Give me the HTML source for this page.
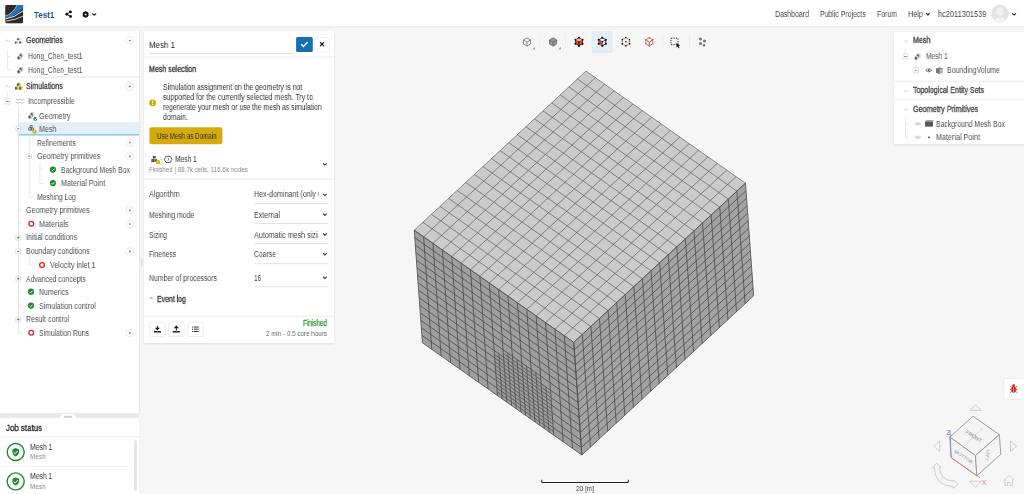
<!DOCTYPE html>
<html><head><meta charset="utf-8">
<style>
html,body{margin:0;padding:0;}
body{width:1024px;height:494px;overflow:hidden;position:relative;background:#f6f6f6;font-family:"Liberation Sans",sans-serif;}
.abs{position:absolute;}
.t{position:absolute;white-space:nowrap;transform-origin:0 0;will-change:transform;}
.clip{position:absolute;overflow:hidden;}
.panel{position:absolute;background:#fff;}
.hl{position:absolute;background:#e6e6e6;height:1px;}
</style></head><body>
<!-- top bar -->
<div class="abs" style="left:0;top:25px;width:1024px;height:4px;background:linear-gradient(#ebebeb,#f0f0f0 50%,#f6f6f6);"></div><div class="abs" style="left:0;top:0;width:1024px;height:25.5px;background:#fff;"></div>
<!-- left panel -->
<div class="panel" style="left:0;top:31px;width:139px;height:382px;box-shadow:1px 0 1px rgba(0,0,0,0.06);"></div>
<!-- job status -->
<div class="panel" style="left:0;top:418px;width:139px;height:76px;"></div>
<!-- mesh panel -->
<div class="panel" style="left:144px;top:31px;width:190px;height:312px;box-shadow:0 1px 2px rgba(0,0,0,0.1);"></div>
<!-- right panel -->
<div class="panel" style="left:894px;top:32px;width:130px;height:112px;box-shadow:0 1px 3px rgba(0,0,0,0.1);"></div>
<!-- logo -->
<svg class="abs" style="left:2px;top:2px" width="24" height="24" viewBox="0 0 24 24">
<defs><clipPath id="lc"><path d="M4.7,2.9 H21.1 V19.4 Q21.1,21.4 19.1,21.4 H5.2 Q3.2,21.4 3.2,19.4 V4.4 Q3.2,2.9 4.7,2.9Z"/></clipPath></defs>
<g clip-path="url(#lc)">
<rect x="3" y="2.7" width="18.3" height="18.9" fill="#2e2a28"/>
<path d="M2,14.6 Q11,12.6 15.8,2" stroke="#fff" stroke-width="0.8" fill="none"/>
<path d="M2,14.9 Q11,12.8 16.2,2 L22,2 L22,5.6 Q13,15 2,16.8 Z" fill="#1f78bd"/>
<path d="M2,17.4 Q13,15.6 22,8.2" stroke="#fff" stroke-width="0.9" fill="none"/>
<path d="M3.5,19.2 Q14,17.8 22,13.8" stroke="#fff" stroke-width="0.8" fill="none"/>
</g></svg>
<!-- share -->
<svg class="abs" style="left:64px;top:10px" width="9" height="9" viewBox="64 10 9 9">
<path d="M70.4,11.9 L66.8,14.2 L70.5,16.5" stroke="#111" stroke-width="0.9" fill="none"/>
<circle cx="70.4" cy="11.9" r="1.45" fill="#111"/><circle cx="66.8" cy="14.2" r="1.45" fill="#111"/><circle cx="70.5" cy="16.5" r="1.45" fill="#111"/>
</svg>
<!-- gear -->
<svg class="abs" style="left:81px;top:10px" width="18" height="9" viewBox="81 10 18 9">
<g transform="translate(85.6,14.4)">
<circle r="2.1" fill="none" stroke="#111" stroke-width="1.5"/>
<g fill="#111"><rect x="-0.7" y="-3.1" width="1.4" height="6.2"/><rect x="-0.7" y="-3.1" width="1.4" height="6.2" transform="rotate(60)"/><rect x="-0.7" y="-3.1" width="1.4" height="6.2" transform="rotate(120)"/></g>
<circle r="0.9" fill="#fff"/>
</g>
<path d="M92.3,13.3 L94.2,15.2 L96.1,13.3" stroke="#222" stroke-width="1.1" fill="none"/>
</svg>
<!-- help caret -->
<svg class="abs" style="left:924px;top:11px" width="8" height="6" viewBox="924 11 8 6">
<path d="M926.2,13.2 L927.9,14.9 L929.6,13.2" stroke="#222" stroke-width="1.2" fill="none"/></svg>
<!-- avatar -->
<svg class="abs" style="left:990px;top:3px" width="30" height="21" viewBox="990 3 30 21">
<defs><clipPath id="av"><circle cx="999.9" cy="13.6" r="8.6"/></clipPath></defs>
<circle cx="999.9" cy="13.6" r="8.8" fill="#e3e3e3" stroke="#e9e9e9" stroke-width="0.6"/>
<g clip-path="url(#av)"><ellipse cx="1000" cy="11.6" rx="3.4" ry="4.2" fill="#f1f1f1"/><ellipse cx="1000" cy="22.5" rx="7" ry="5" fill="#f1f1f1"/></g>
<path d="M1012.2,13.3 L1014.1,15.1 L1016,13.3" stroke="#222" stroke-width="1.1" fill="none"/>
</svg>
<svg class="abs" style="left:0;top:31px" width="139" height="382" viewBox="0 31 139 382"><rect x="0" y="76.2" width="139" height="1.5" fill="#efefef"/><rect x="17.8" y="122.2" width="121.2" height="13" fill="#e3eff8"/><rect x="17.8" y="134.4" width="121.2" height="1" fill="#5ab8ea"/><path d="M5.1,41.8 L7.1,39.8 L9.1,41.8" stroke="#b6c0cc" stroke-width="0.8" fill="none"/><rect x="16.900000000000002" y="37.699999999999996" width="3.9" height="2.7" rx="1.56" fill="#cfcfcf"/><rect x="16.900000000000002" y="38.24" width="2.15" height="2.03" rx="1.17" fill="#555"/><rect x="14.9" y="40.9" width="3.0" height="2.9" rx="1.20" fill="#cfcfcf"/><rect x="14.9" y="41.48" width="1.65" height="2.17" rx="0.90" fill="#555"/><rect x="18.8" y="40.9" width="3.9" height="2.9" rx="1.56" fill="#cfcfcf"/><rect x="18.8" y="41.48" width="2.15" height="2.17" rx="1.17" fill="#555"/><circle cx="129.8" cy="40.5" r="3.8" fill="#fff" stroke="#dfe5ec" stroke-width="0.8"/><circle cx="129.8" cy="40.5" r="0.85" fill="#666"/><line x1="7.5" y1="49.5" x2="7.5" y2="69.9" stroke="#e4e9ee" stroke-width="1"/><line x1="7.5" y1="56.4" x2="11" y2="56.4" stroke="#e4e9ee" stroke-width="1"/><line x1="7.5" y1="69.9" x2="11" y2="69.9" stroke="#e4e9ee" stroke-width="1"/><rect x="19.400000000000002" y="53.0" width="3.9" height="4.9" rx="1.56" fill="#cfcfcf"/><rect x="19.400000000000002" y="53.98" width="2.15" height="3.68" rx="1.17" fill="#555"/><rect x="17.5" y="55.6" width="3.8" height="4.2" rx="1.52" fill="#cfcfcf"/><rect x="17.5" y="56.44" width="2.09" height="3.15" rx="1.14" fill="#555"/><rect x="19.400000000000002" y="66.7" width="3.9" height="4.9" rx="1.56" fill="#cfcfcf"/><rect x="19.400000000000002" y="67.68" width="2.15" height="3.68" rx="1.17" fill="#555"/><rect x="17.5" y="69.3" width="3.8" height="4.2" rx="1.52" fill="#cfcfcf"/><rect x="17.5" y="70.14" width="2.09" height="3.15" rx="1.14" fill="#555"/><path d="M4.9,87.6 L6.9,85.6 L8.9,87.6" stroke="#b6c0cc" stroke-width="0.8" fill="none"/><rect x="16.9" y="82.4" width="3.9" height="3.9" rx="1.75" fill="#f2c200"/><rect x="16.9" y="83.18" width="2.15" height="2.92" rx="1.17" fill="#1a6fc0"/><rect x="14.9" y="85.9" width="3.6" height="4.1" rx="1.62" fill="#f2c200"/><rect x="14.9" y="86.72" width="1.98" height="3.07" rx="1.08" fill="#1a6fc0"/><rect x="18.9" y="85.9" width="3.8" height="4.1" rx="1.71" fill="#f2c200"/><rect x="18.9" y="86.72" width="2.09" height="3.07" rx="1.14" fill="#1a6fc0"/><circle cx="129.8" cy="86.4" r="3.8" fill="#fff" stroke="#dfe5ec" stroke-width="0.8"/><circle cx="129.8" cy="86.4" r="0.85" fill="#666"/><line x1="7.3" y1="92" x2="7.3" y2="98.3" stroke="#e4e9ee" stroke-width="1"/><rect x="4.9" y="98.80000000000001" width="5.2" height="5.2" fill="#fff" stroke="#d5dce4" stroke-width="0.9" rx="0.5"/><line x1="6.1000000000000005" y1="101.4" x2="8.900000000000002" y2="101.4" stroke="#555" stroke-width="0.7"/><path d="M16,99.3 Q18,101 20.2,99.3 Q22.3,101 24.4,99.3" stroke="#aaa" stroke-width="0.7" fill="none"/><path d="M16,102.3 Q18,104 20.2,102.3 Q22.3,104 24.4,102.3" stroke="#aaa" stroke-width="0.7" fill="none"/><line x1="18.5" y1="106.3" x2="18.5" y2="332.8" stroke="#e4e9ee" stroke-width="1"/><line x1="18.5" y1="115.5" x2="22" y2="115.5" stroke="#e4e9ee" stroke-width="1"/><line x1="18.5" y1="210.2" x2="22" y2="210.2" stroke="#e4e9ee" stroke-width="1"/><line x1="18.5" y1="223.8" x2="22" y2="223.8" stroke="#e4e9ee" stroke-width="1"/><line x1="18.5" y1="291.7" x2="22" y2="291.7" stroke="#e4e9ee" stroke-width="1"/><line x1="18.5" y1="305.6" x2="22" y2="305.6" stroke="#e4e9ee" stroke-width="1"/><line x1="18.5" y1="332.8" x2="22" y2="332.8" stroke="#e4e9ee" stroke-width="1"/><rect x="30.400000000000002" y="112.0" width="3.9" height="4.9" rx="1.56" fill="#cfcfcf"/><rect x="30.400000000000002" y="112.98" width="2.15" height="3.68" rx="1.17" fill="#555"/><rect x="28.5" y="114.6" width="3.8" height="4.2" rx="1.52" fill="#cfcfcf"/><rect x="28.5" y="115.44" width="2.09" height="3.15" rx="1.14" fill="#555"/><circle cx="35.2" cy="119.1" r="2.0" fill="#1d8a2c"/><path d="M33.7,119.19999999999999 L34.800000000000004,120.3 L36.800000000000004,118.1" stroke="#fff" stroke-width="0.9" fill="none"/><rect x="15.9" y="126.50000000000001" width="4.6" height="4.6" fill="#fff" stroke="#d5dce4" stroke-width="0.9" rx="0.5"/><line x1="17.1" y1="128.8" x2="19.3" y2="128.8" stroke="#555" stroke-width="0.7"/><g transform="translate(28.2,125)" fill="none" stroke="#555" stroke-width="0.8"><path d="M2,0.5 L4,0.5 L4,2.5 L2,2.5Z M0.6,2.8 L2.8,2.8 L2.8,5.2 L0.6,5.2Z M3.2,3 L5.2,3 L5.2,5.2 L3.2,5.2Z"/></g><circle cx="34.6" cy="131.8" r="2.1" fill="#e0a800"/><rect x="34.25" y="130.5" width="0.7" height="1.8" fill="#fff"/><rect x="34.25" y="132.6" width="0.7" height="0.6" fill="#fff"/><line x1="29.3" y1="136" x2="29.3" y2="196.9" stroke="#e4e9ee" stroke-width="1"/><line x1="29.3" y1="142.3" x2="32.8" y2="142.3" stroke="#e4e9ee" stroke-width="1"/><line x1="29.3" y1="196.9" x2="32.8" y2="196.9" stroke="#e4e9ee" stroke-width="1"/><circle cx="129.8" cy="142.5" r="3.8" fill="#fff" stroke="#dfe5ec" stroke-width="0.8"/><circle cx="129.8" cy="142.5" r="0.85" fill="#666"/><rect x="26.9" y="153.89999999999998" width="4.6" height="4.6" fill="#fff" stroke="#d5dce4" stroke-width="0.9" rx="0.5"/><line x1="28.099999999999998" y1="156.2" x2="30.3" y2="156.2" stroke="#555" stroke-width="0.7"/><circle cx="129.8" cy="156.3" r="3.8" fill="#fff" stroke="#dfe5ec" stroke-width="0.8"/><circle cx="129.8" cy="156.3" r="0.85" fill="#666"/><line x1="39.9" y1="162.5" x2="39.9" y2="183.4" stroke="#e4e9ee" stroke-width="1"/><line x1="39.9" y1="169.2" x2="43.4" y2="169.2" stroke="#e4e9ee" stroke-width="1"/><line x1="39.9" y1="183.4" x2="43.4" y2="183.4" stroke="#e4e9ee" stroke-width="1"/><circle cx="52.9" cy="169.6" r="3.1" fill="#1d8a2c"/><path d="M51.4,169.7 L52.5,170.79999999999998 L54.5,168.6" stroke="#fff" stroke-width="0.9" fill="none"/><circle cx="52.9" cy="183.1" r="3.1" fill="#1d8a2c"/><path d="M51.4,183.2 L52.5,184.29999999999998 L54.5,182.1" stroke="#fff" stroke-width="0.9" fill="none"/><circle cx="129.8" cy="210.3" r="3.8" fill="#fff" stroke="#dfe5ec" stroke-width="0.8"/><circle cx="129.8" cy="210.3" r="0.85" fill="#666"/><circle cx="31.3" cy="223.8" r="2.4" fill="none" stroke="#e0201b" stroke-width="1.3"/><circle cx="129.8" cy="224" r="3.8" fill="#fff" stroke="#dfe5ec" stroke-width="0.8"/><circle cx="129.8" cy="224" r="0.85" fill="#666"/><rect x="15.8" y="235.15" width="4.9" height="4.9" fill="#fff" stroke="#d5dce4" stroke-width="0.9" rx="0.5"/><line x1="17.0" y1="237.6" x2="19.500000000000004" y2="237.6" stroke="#555" stroke-width="0.7"/><line x1="18.25" y1="236.4" x2="18.25" y2="238.79999999999998" stroke="#555" stroke-width="0.7"/><rect x="15.8" y="248.95000000000002" width="4.9" height="4.9" fill="#fff" stroke="#d5dce4" stroke-width="0.9" rx="0.5"/><line x1="17.0" y1="251.4" x2="19.500000000000004" y2="251.4" stroke="#555" stroke-width="0.7"/><circle cx="129.8" cy="251.4" r="3.8" fill="#fff" stroke="#dfe5ec" stroke-width="0.8"/><circle cx="129.8" cy="251.4" r="0.85" fill="#666"/><line x1="29.3" y1="256.5" x2="29.3" y2="265" stroke="#e4e9ee" stroke-width="1"/><line x1="29.3" y1="265" x2="32.8" y2="265" stroke="#e4e9ee" stroke-width="1"/><circle cx="42" cy="265" r="2.4" fill="none" stroke="#e0201b" stroke-width="1.3"/><rect x="15.8" y="276.25" width="4.9" height="4.9" fill="#fff" stroke="#d5dce4" stroke-width="0.9" rx="0.5"/><line x1="17.0" y1="278.7" x2="19.500000000000004" y2="278.7" stroke="#555" stroke-width="0.7"/><line x1="18.25" y1="277.5" x2="18.25" y2="279.9" stroke="#555" stroke-width="0.7"/><circle cx="31" cy="291.7" r="3.1" fill="#1d8a2c"/><path d="M29.5,291.8 L30.6,292.9 L32.6,290.7" stroke="#fff" stroke-width="0.9" fill="none"/><circle cx="31" cy="305.6" r="3.1" fill="#1d8a2c"/><path d="M29.5,305.70000000000005 L30.6,306.8 L32.6,304.6" stroke="#fff" stroke-width="0.9" fill="none"/><rect x="15.8" y="317.05" width="4.9" height="4.9" fill="#fff" stroke="#d5dce4" stroke-width="0.9" rx="0.5"/><line x1="17.0" y1="319.5" x2="19.500000000000004" y2="319.5" stroke="#555" stroke-width="0.7"/><line x1="18.25" y1="318.3" x2="18.25" y2="320.7" stroke="#555" stroke-width="0.7"/><circle cx="31.3" cy="332.8" r="2.4" fill="none" stroke="#e0201b" stroke-width="1.3"/><circle cx="129.8" cy="332.9" r="3.8" fill="#fff" stroke="#dfe5ec" stroke-width="0.8"/><circle cx="129.8" cy="332.9" r="0.85" fill="#666"/></svg>
<svg class="abs" style="left:144px;top:31px" width="190" height="312" viewBox="144 31 190 312"><rect x="149.4" y="53" width="144" height="0.9" fill="#d4dde6"/><rect x="296.1" y="37" width="16.7" height="15.1" rx="1.6" fill="#1170b0"/><path d="M301.1,44.2 L303.5,46.5 L307.7,42.1" stroke="#fff" stroke-width="1.5" fill="none"/><rect x="314.7" y="37.5" width="14.6" height="14.4" rx="1.6" fill="#fff" stroke="#eceff3" stroke-width="0.8"/><path d="M320,42.2 L324,46.2 M324,42.2 L320,46.2" stroke="#111" stroke-width="1.2" fill="none"/><rect x="144" y="56.6" width="190" height="1" fill="#ececec"/><circle cx="152.6" cy="102.9" r="3.4" fill="#d4a800"/><rect x="152.1" y="100.7" width="1" height="2.7" fill="#fff"/><rect x="152.1" y="104.1" width="1" height="0.9" fill="#fff"/><rect x="149.4" y="127.3" width="73" height="17" rx="2" fill="#d5aa0c"/><g fill="#555"><rect x="152.8" y="156" width="2.8" height="2.6"/><rect x="151.3" y="159" width="2.8" height="3.2"/><rect x="154.3" y="159.2" width="2.8" height="2.6"/></g><circle cx="158" cy="162" r="2.2" fill="#dcaa00"/><rect x="157.6" y="160.9" width="0.8" height="1.5" fill="#fff"/><circle cx="161" cy="159.2" r="0.5" fill="#888"/><path d="M166,156.3 L170.2,156.3 L172,159.3 L170.2,162.4 L166,162.4 L164.2,159.3Z" fill="none" stroke="#333" stroke-width="0.8"/><path d="M167.6,158 L169,159.3 L167.6,160.6" stroke="#333" stroke-width="0.7" fill="none"/><path d="M323.0,163.29999999999998 L324.8,165.1 L326.6,163.29999999999998" stroke="#333" stroke-width="1.05" fill="none"/><rect x="144" y="178.6" width="190" height="1" fill="#ececec"/><rect x="254.3" y="203.2" width="74.2" height="0.9" fill="#d7dee6"/><path d="M323.09999999999997,193.79999999999998 L324.9,195.6 L326.7,193.79999999999998" stroke="#333" stroke-width="1.05" fill="none"/><rect x="254.3" y="223.2" width="74.2" height="0.9" fill="#d7dee6"/><path d="M323.09999999999997,213.6 L324.9,215.4 L326.7,213.6" stroke="#333" stroke-width="1.05" fill="none"/><rect x="254.3" y="243.2" width="74.2" height="0.9" fill="#d7dee6"/><path d="M323.09999999999997,233.4 L324.9,235.20000000000002 L326.7,233.4" stroke="#333" stroke-width="1.05" fill="none"/><rect x="254.3" y="263.3" width="74.2" height="0.9" fill="#d7dee6"/><path d="M323.09999999999997,253.1 L324.9,254.9 L326.7,253.1" stroke="#333" stroke-width="1.05" fill="none"/><rect x="254.3" y="286.3" width="74.2" height="0.9" fill="#d7dee6"/><path d="M323.09999999999997,276.6 L324.9,278.4 L326.7,276.6" stroke="#333" stroke-width="1.05" fill="none"/><path d="M150,299 L151.3,297.4 L152.6,299" stroke="#555" stroke-width="0.7" fill="none"/><rect x="144" y="315.8" width="190" height="1" fill="#ececec"/><rect x="149.8" y="322.4" width="15.4" height="14.2" rx="1.4" fill="#fff" stroke="#e6e9ee" stroke-width="0.8"/><rect x="168.70000000000002" y="322.4" width="15.4" height="14.2" rx="1.4" fill="#fff" stroke="#e6e9ee" stroke-width="0.8"/><rect x="187.9" y="322.4" width="15.4" height="14.2" rx="1.4" fill="#fff" stroke="#e6e9ee" stroke-width="0.8"/><rect x="157" y="325.8" width="0.9" height="3" fill="#111"/><path d="M154.9,327.8 L159.9,327.8 L157.4,330.4Z" fill="#111"/><path d="M153.9,330.9 L156.4,330.9 L157.4,331.6 L158.4,330.9 L160.9,330.9 L160.9,332.5 L153.9,332.5Z" fill="#111"/><path d="M173.8,328.2 L178.8,328.2 L176.3,325.6Z" fill="#111"/><rect x="175.85" y="327.8" width="0.9" height="3" fill="#111"/><path d="M172.8,330.9 L175.3,330.9 L176.3,331.6 L177.3,330.9 L179.8,330.9 L179.8,332.5 L172.8,332.5Z" fill="#111"/><rect x="192" y="326.6" width="0.9" height="0.9" fill="#222"/><rect x="193.6" y="326.6" width="5.1" height="0.9" fill="#222"/><rect x="192" y="328.7" width="0.9" height="0.9" fill="#222"/><rect x="193.6" y="328.7" width="5.1" height="0.9" fill="#222"/><rect x="192" y="331.0" width="0.9" height="0.9" fill="#222"/><rect x="193.6" y="331.0" width="5.1" height="0.9" fill="#222"/></svg>
<svg class="abs" style="left:0;top:0" width="1024" height="494" viewBox="0 0 1024 494">
<polygon points="586.00,71.00 745.50,183.20 753.70,295.80 581.90,455.00 422.40,342.80 414.20,230.20" fill="none" stroke="#ffffff" stroke-width="2.2" stroke-linejoin="miter"/>
<polygon points="586.00,71.00 745.50,183.20 573.70,342.40 414.20,230.20" fill="#cbcbcb"/>
<polygon points="414.20,230.20 573.70,342.40 581.90,455.00 422.40,342.80" fill="#9f9f9f"/>
<polygon points="573.70,342.40 745.50,183.20 753.70,295.80 581.90,455.00" fill="#a3a3a3"/>
<line x1="586.00" y1="71.00" x2="745.50" y2="183.20" stroke="#656565" stroke-width="0.75"/><line x1="577.41" y1="78.96" x2="736.91" y2="191.16" stroke="#656565" stroke-width="0.75"/><line x1="568.82" y1="86.92" x2="728.32" y2="199.12" stroke="#656565" stroke-width="0.75"/><line x1="560.23" y1="94.88" x2="719.73" y2="207.08" stroke="#656565" stroke-width="0.75"/><line x1="551.64" y1="102.84" x2="711.14" y2="215.04" stroke="#656565" stroke-width="0.75"/><line x1="543.05" y1="110.80" x2="702.55" y2="223.00" stroke="#656565" stroke-width="0.75"/><line x1="534.46" y1="118.76" x2="693.96" y2="230.96" stroke="#656565" stroke-width="0.75"/><line x1="525.87" y1="126.72" x2="685.37" y2="238.92" stroke="#656565" stroke-width="0.75"/><line x1="517.28" y1="134.68" x2="676.78" y2="246.88" stroke="#656565" stroke-width="0.75"/><line x1="508.69" y1="142.64" x2="668.19" y2="254.84" stroke="#656565" stroke-width="0.75"/><line x1="500.10" y1="150.60" x2="659.60" y2="262.80" stroke="#656565" stroke-width="0.75"/><line x1="491.51" y1="158.56" x2="651.01" y2="270.76" stroke="#656565" stroke-width="0.75"/><line x1="482.92" y1="166.52" x2="642.42" y2="278.72" stroke="#656565" stroke-width="0.75"/><line x1="474.33" y1="174.48" x2="633.83" y2="286.68" stroke="#656565" stroke-width="0.75"/><line x1="465.74" y1="182.44" x2="625.24" y2="294.64" stroke="#656565" stroke-width="0.75"/><line x1="457.15" y1="190.40" x2="616.65" y2="302.60" stroke="#656565" stroke-width="0.75"/><line x1="448.56" y1="198.36" x2="608.06" y2="310.56" stroke="#656565" stroke-width="0.75"/><line x1="439.97" y1="206.32" x2="599.47" y2="318.52" stroke="#656565" stroke-width="0.75"/><line x1="431.38" y1="214.28" x2="590.88" y2="326.48" stroke="#656565" stroke-width="0.75"/><line x1="422.79" y1="222.24" x2="582.29" y2="334.44" stroke="#656565" stroke-width="0.75"/><line x1="414.20" y1="230.20" x2="573.70" y2="342.40" stroke="#656565" stroke-width="0.75"/><line x1="586.00" y1="71.00" x2="414.20" y2="230.20" stroke="#656565" stroke-width="0.75"/><line x1="595.38" y1="77.60" x2="423.58" y2="236.80" stroke="#656565" stroke-width="0.75"/><line x1="604.76" y1="84.20" x2="432.96" y2="243.40" stroke="#656565" stroke-width="0.75"/><line x1="614.15" y1="90.80" x2="442.35" y2="250.00" stroke="#656565" stroke-width="0.75"/><line x1="623.53" y1="97.40" x2="451.73" y2="256.60" stroke="#656565" stroke-width="0.75"/><line x1="632.91" y1="104.00" x2="461.11" y2="263.20" stroke="#656565" stroke-width="0.75"/><line x1="642.29" y1="110.60" x2="470.49" y2="269.80" stroke="#656565" stroke-width="0.75"/><line x1="651.68" y1="117.20" x2="479.88" y2="276.40" stroke="#656565" stroke-width="0.75"/><line x1="661.06" y1="123.80" x2="489.26" y2="283.00" stroke="#656565" stroke-width="0.75"/><line x1="670.44" y1="130.40" x2="498.64" y2="289.60" stroke="#656565" stroke-width="0.75"/><line x1="679.82" y1="137.00" x2="508.02" y2="296.20" stroke="#656565" stroke-width="0.75"/><line x1="689.21" y1="143.60" x2="517.41" y2="302.80" stroke="#656565" stroke-width="0.75"/><line x1="698.59" y1="150.20" x2="526.79" y2="309.40" stroke="#656565" stroke-width="0.75"/><line x1="707.97" y1="156.80" x2="536.17" y2="316.00" stroke="#656565" stroke-width="0.75"/><line x1="717.35" y1="163.40" x2="545.55" y2="322.60" stroke="#656565" stroke-width="0.75"/><line x1="726.74" y1="170.00" x2="554.94" y2="329.20" stroke="#656565" stroke-width="0.75"/><line x1="736.12" y1="176.60" x2="564.32" y2="335.80" stroke="#656565" stroke-width="0.75"/><line x1="745.50" y1="183.20" x2="573.70" y2="342.40" stroke="#656565" stroke-width="0.75"/>
<line x1="414.20" y1="230.20" x2="422.40" y2="342.80" stroke="#4f4f4f" stroke-width="0.85"/><line x1="423.58" y1="236.80" x2="431.78" y2="349.40" stroke="#4f4f4f" stroke-width="0.85"/><line x1="432.96" y1="243.40" x2="441.16" y2="356.00" stroke="#4f4f4f" stroke-width="0.85"/><line x1="442.35" y1="250.00" x2="450.55" y2="362.60" stroke="#4f4f4f" stroke-width="0.85"/><line x1="451.73" y1="256.60" x2="459.93" y2="369.20" stroke="#4f4f4f" stroke-width="0.85"/><line x1="461.11" y1="263.20" x2="469.31" y2="375.80" stroke="#4f4f4f" stroke-width="0.85"/><line x1="470.49" y1="269.80" x2="478.69" y2="382.40" stroke="#4f4f4f" stroke-width="0.85"/><line x1="479.88" y1="276.40" x2="488.08" y2="389.00" stroke="#4f4f4f" stroke-width="0.85"/><line x1="489.26" y1="283.00" x2="497.46" y2="395.60" stroke="#4f4f4f" stroke-width="0.85"/><line x1="498.64" y1="289.60" x2="506.84" y2="402.20" stroke="#4f4f4f" stroke-width="0.85"/><line x1="508.02" y1="296.20" x2="516.22" y2="408.80" stroke="#4f4f4f" stroke-width="0.85"/><line x1="517.41" y1="302.80" x2="525.61" y2="415.40" stroke="#4f4f4f" stroke-width="0.85"/><line x1="526.79" y1="309.40" x2="534.99" y2="422.00" stroke="#4f4f4f" stroke-width="0.85"/><line x1="536.17" y1="316.00" x2="544.37" y2="428.60" stroke="#4f4f4f" stroke-width="0.85"/><line x1="545.55" y1="322.60" x2="553.75" y2="435.20" stroke="#4f4f4f" stroke-width="0.85"/><line x1="554.94" y1="329.20" x2="563.14" y2="441.80" stroke="#4f4f4f" stroke-width="0.85"/><line x1="564.32" y1="335.80" x2="572.52" y2="448.40" stroke="#4f4f4f" stroke-width="0.85"/><line x1="573.70" y1="342.40" x2="581.90" y2="455.00" stroke="#4f4f4f" stroke-width="0.85"/><line x1="414.20" y1="230.20" x2="573.70" y2="342.40" stroke="#4f4f4f" stroke-width="0.85"/><line x1="414.75" y1="237.71" x2="574.25" y2="349.91" stroke="#4f4f4f" stroke-width="0.85"/><line x1="415.29" y1="245.21" x2="574.79" y2="357.41" stroke="#4f4f4f" stroke-width="0.85"/><line x1="415.84" y1="252.72" x2="575.34" y2="364.92" stroke="#4f4f4f" stroke-width="0.85"/><line x1="416.39" y1="260.23" x2="575.89" y2="372.43" stroke="#4f4f4f" stroke-width="0.85"/><line x1="416.93" y1="267.73" x2="576.43" y2="379.93" stroke="#4f4f4f" stroke-width="0.85"/><line x1="417.48" y1="275.24" x2="576.98" y2="387.44" stroke="#4f4f4f" stroke-width="0.85"/><line x1="418.03" y1="282.75" x2="577.53" y2="394.95" stroke="#4f4f4f" stroke-width="0.85"/><line x1="418.57" y1="290.25" x2="578.07" y2="402.45" stroke="#4f4f4f" stroke-width="0.85"/><line x1="419.12" y1="297.76" x2="578.62" y2="409.96" stroke="#4f4f4f" stroke-width="0.85"/><line x1="419.67" y1="305.27" x2="579.17" y2="417.47" stroke="#4f4f4f" stroke-width="0.85"/><line x1="420.21" y1="312.77" x2="579.71" y2="424.97" stroke="#4f4f4f" stroke-width="0.85"/><line x1="420.76" y1="320.28" x2="580.26" y2="432.48" stroke="#4f4f4f" stroke-width="0.85"/><line x1="421.31" y1="327.79" x2="580.81" y2="439.99" stroke="#4f4f4f" stroke-width="0.85"/><line x1="421.85" y1="335.29" x2="581.35" y2="447.49" stroke="#4f4f4f" stroke-width="0.85"/><line x1="422.40" y1="342.80" x2="581.90" y2="455.00" stroke="#4f4f4f" stroke-width="0.85"/>
<line x1="573.70" y1="342.40" x2="581.90" y2="455.00" stroke="#4f4f4f" stroke-width="0.85"/><line x1="582.29" y1="334.44" x2="590.49" y2="447.04" stroke="#4f4f4f" stroke-width="0.85"/><line x1="590.88" y1="326.48" x2="599.08" y2="439.08" stroke="#4f4f4f" stroke-width="0.85"/><line x1="599.47" y1="318.52" x2="607.67" y2="431.12" stroke="#4f4f4f" stroke-width="0.85"/><line x1="608.06" y1="310.56" x2="616.26" y2="423.16" stroke="#4f4f4f" stroke-width="0.85"/><line x1="616.65" y1="302.60" x2="624.85" y2="415.20" stroke="#4f4f4f" stroke-width="0.85"/><line x1="625.24" y1="294.64" x2="633.44" y2="407.24" stroke="#4f4f4f" stroke-width="0.85"/><line x1="633.83" y1="286.68" x2="642.03" y2="399.28" stroke="#4f4f4f" stroke-width="0.85"/><line x1="642.42" y1="278.72" x2="650.62" y2="391.32" stroke="#4f4f4f" stroke-width="0.85"/><line x1="651.01" y1="270.76" x2="659.21" y2="383.36" stroke="#4f4f4f" stroke-width="0.85"/><line x1="659.60" y1="262.80" x2="667.80" y2="375.40" stroke="#4f4f4f" stroke-width="0.85"/><line x1="668.19" y1="254.84" x2="676.39" y2="367.44" stroke="#4f4f4f" stroke-width="0.85"/><line x1="676.78" y1="246.88" x2="684.98" y2="359.48" stroke="#4f4f4f" stroke-width="0.85"/><line x1="685.37" y1="238.92" x2="693.57" y2="351.52" stroke="#4f4f4f" stroke-width="0.85"/><line x1="693.96" y1="230.96" x2="702.16" y2="343.56" stroke="#4f4f4f" stroke-width="0.85"/><line x1="702.55" y1="223.00" x2="710.75" y2="335.60" stroke="#4f4f4f" stroke-width="0.85"/><line x1="711.14" y1="215.04" x2="719.34" y2="327.64" stroke="#4f4f4f" stroke-width="0.85"/><line x1="719.73" y1="207.08" x2="727.93" y2="319.68" stroke="#4f4f4f" stroke-width="0.85"/><line x1="728.32" y1="199.12" x2="736.52" y2="311.72" stroke="#4f4f4f" stroke-width="0.85"/><line x1="736.91" y1="191.16" x2="745.11" y2="303.76" stroke="#4f4f4f" stroke-width="0.85"/><line x1="745.50" y1="183.20" x2="753.70" y2="295.80" stroke="#4f4f4f" stroke-width="0.85"/><line x1="573.70" y1="342.40" x2="745.50" y2="183.20" stroke="#4f4f4f" stroke-width="0.85"/><line x1="574.25" y1="349.91" x2="746.05" y2="190.71" stroke="#4f4f4f" stroke-width="0.85"/><line x1="574.79" y1="357.41" x2="746.59" y2="198.21" stroke="#4f4f4f" stroke-width="0.85"/><line x1="575.34" y1="364.92" x2="747.14" y2="205.72" stroke="#4f4f4f" stroke-width="0.85"/><line x1="575.89" y1="372.43" x2="747.69" y2="213.23" stroke="#4f4f4f" stroke-width="0.85"/><line x1="576.43" y1="379.93" x2="748.23" y2="220.73" stroke="#4f4f4f" stroke-width="0.85"/><line x1="576.98" y1="387.44" x2="748.78" y2="228.24" stroke="#4f4f4f" stroke-width="0.85"/><line x1="577.53" y1="394.95" x2="749.33" y2="235.75" stroke="#4f4f4f" stroke-width="0.85"/><line x1="578.07" y1="402.45" x2="749.87" y2="243.25" stroke="#4f4f4f" stroke-width="0.85"/><line x1="578.62" y1="409.96" x2="750.42" y2="250.76" stroke="#4f4f4f" stroke-width="0.85"/><line x1="579.17" y1="417.47" x2="750.97" y2="258.27" stroke="#4f4f4f" stroke-width="0.85"/><line x1="579.71" y1="424.97" x2="751.51" y2="265.77" stroke="#4f4f4f" stroke-width="0.85"/><line x1="580.26" y1="432.48" x2="752.06" y2="273.28" stroke="#4f4f4f" stroke-width="0.85"/><line x1="580.81" y1="439.99" x2="752.61" y2="280.79" stroke="#4f4f4f" stroke-width="0.85"/><line x1="581.35" y1="447.49" x2="753.15" y2="288.29" stroke="#4f4f4f" stroke-width="0.85"/><line x1="581.90" y1="455.00" x2="753.70" y2="295.80" stroke="#4f4f4f" stroke-width="0.85"/>
<line x1="498.87" y1="353.86" x2="499.42" y2="361.37" stroke="#4f4f4f" stroke-width="0.8"/><line x1="494.45" y1="354.31" x2="503.83" y2="360.91" stroke="#4f4f4f" stroke-width="0.8"/><line x1="499.42" y1="361.37" x2="499.96" y2="368.87" stroke="#4f4f4f" stroke-width="0.8"/><line x1="495.00" y1="361.82" x2="504.38" y2="368.42" stroke="#4f4f4f" stroke-width="0.8"/><line x1="499.96" y1="368.87" x2="500.51" y2="376.38" stroke="#4f4f4f" stroke-width="0.8"/><line x1="495.55" y1="369.33" x2="504.93" y2="375.93" stroke="#4f4f4f" stroke-width="0.8"/><line x1="500.51" y1="376.38" x2="501.06" y2="383.89" stroke="#4f4f4f" stroke-width="0.8"/><line x1="496.09" y1="376.83" x2="505.47" y2="383.43" stroke="#4f4f4f" stroke-width="0.8"/><line x1="501.06" y1="383.89" x2="501.60" y2="391.39" stroke="#4f4f4f" stroke-width="0.8"/><line x1="496.64" y1="384.34" x2="506.02" y2="390.94" stroke="#4f4f4f" stroke-width="0.8"/><line x1="501.60" y1="391.39" x2="502.15" y2="398.90" stroke="#4f4f4f" stroke-width="0.8"/><line x1="497.19" y1="391.85" x2="506.57" y2="398.45" stroke="#4f4f4f" stroke-width="0.8"/><line x1="507.71" y1="352.95" x2="508.25" y2="360.46" stroke="#4f4f4f" stroke-width="0.8"/><line x1="503.29" y1="353.41" x2="512.67" y2="360.01" stroke="#4f4f4f" stroke-width="0.8"/><line x1="508.25" y1="360.46" x2="508.80" y2="367.97" stroke="#4f4f4f" stroke-width="0.8"/><line x1="503.83" y1="360.91" x2="513.22" y2="367.51" stroke="#4f4f4f" stroke-width="0.8"/><line x1="508.80" y1="367.97" x2="509.35" y2="375.47" stroke="#4f4f4f" stroke-width="0.8"/><line x1="504.38" y1="368.42" x2="513.76" y2="375.02" stroke="#4f4f4f" stroke-width="0.8"/><line x1="509.35" y1="375.47" x2="509.89" y2="382.98" stroke="#4f4f4f" stroke-width="0.8"/><line x1="504.93" y1="375.93" x2="514.31" y2="382.53" stroke="#4f4f4f" stroke-width="0.8"/><line x1="509.89" y1="382.98" x2="510.44" y2="390.49" stroke="#4f4f4f" stroke-width="0.8"/><line x1="505.47" y1="383.43" x2="514.86" y2="390.03" stroke="#4f4f4f" stroke-width="0.8"/><line x1="510.44" y1="390.49" x2="510.99" y2="397.99" stroke="#4f4f4f" stroke-width="0.8"/><line x1="506.02" y1="390.94" x2="515.40" y2="397.54" stroke="#4f4f4f" stroke-width="0.8"/><line x1="510.99" y1="397.99" x2="511.53" y2="405.50" stroke="#4f4f4f" stroke-width="0.8"/><line x1="506.57" y1="398.45" x2="515.95" y2="405.05" stroke="#4f4f4f" stroke-width="0.8"/><line x1="517.09" y1="359.55" x2="517.63" y2="367.06" stroke="#4f4f4f" stroke-width="0.8"/><line x1="512.67" y1="360.01" x2="522.05" y2="366.61" stroke="#4f4f4f" stroke-width="0.8"/><line x1="517.63" y1="367.06" x2="518.18" y2="374.57" stroke="#4f4f4f" stroke-width="0.8"/><line x1="513.22" y1="367.51" x2="522.60" y2="374.11" stroke="#4f4f4f" stroke-width="0.8"/><line x1="518.18" y1="374.57" x2="518.73" y2="382.07" stroke="#4f4f4f" stroke-width="0.8"/><line x1="513.76" y1="375.02" x2="523.15" y2="381.62" stroke="#4f4f4f" stroke-width="0.8"/><line x1="518.73" y1="382.07" x2="519.27" y2="389.58" stroke="#4f4f4f" stroke-width="0.8"/><line x1="514.31" y1="382.53" x2="523.69" y2="389.13" stroke="#4f4f4f" stroke-width="0.8"/><line x1="519.27" y1="389.58" x2="519.82" y2="397.09" stroke="#4f4f4f" stroke-width="0.8"/><line x1="514.86" y1="390.03" x2="524.24" y2="396.63" stroke="#4f4f4f" stroke-width="0.8"/><line x1="519.82" y1="397.09" x2="520.37" y2="404.59" stroke="#4f4f4f" stroke-width="0.8"/><line x1="515.40" y1="397.54" x2="524.79" y2="404.14" stroke="#4f4f4f" stroke-width="0.8"/><line x1="520.37" y1="404.59" x2="520.91" y2="412.10" stroke="#4f4f4f" stroke-width="0.8"/><line x1="515.95" y1="405.05" x2="525.33" y2="411.65" stroke="#4f4f4f" stroke-width="0.8"/><line x1="526.47" y1="366.15" x2="527.02" y2="373.66" stroke="#4f4f4f" stroke-width="0.8"/><line x1="522.05" y1="366.61" x2="531.43" y2="373.21" stroke="#4f4f4f" stroke-width="0.8"/><line x1="527.02" y1="373.66" x2="527.56" y2="381.17" stroke="#4f4f4f" stroke-width="0.8"/><line x1="522.60" y1="374.11" x2="531.98" y2="380.71" stroke="#4f4f4f" stroke-width="0.8"/><line x1="527.56" y1="381.17" x2="528.11" y2="388.67" stroke="#4f4f4f" stroke-width="0.8"/><line x1="523.15" y1="381.62" x2="532.53" y2="388.22" stroke="#4f4f4f" stroke-width="0.8"/><line x1="528.11" y1="388.67" x2="528.66" y2="396.18" stroke="#4f4f4f" stroke-width="0.8"/><line x1="523.69" y1="389.13" x2="533.07" y2="395.73" stroke="#4f4f4f" stroke-width="0.8"/><line x1="528.66" y1="396.18" x2="529.20" y2="403.69" stroke="#4f4f4f" stroke-width="0.8"/><line x1="524.24" y1="396.63" x2="533.62" y2="403.23" stroke="#4f4f4f" stroke-width="0.8"/><line x1="529.20" y1="403.69" x2="529.75" y2="411.19" stroke="#4f4f4f" stroke-width="0.8"/><line x1="524.79" y1="404.14" x2="534.17" y2="410.74" stroke="#4f4f4f" stroke-width="0.8"/><line x1="529.75" y1="411.19" x2="530.30" y2="418.70" stroke="#4f4f4f" stroke-width="0.8"/><line x1="525.33" y1="411.65" x2="534.71" y2="418.25" stroke="#4f4f4f" stroke-width="0.8"/><line x1="535.85" y1="372.75" x2="536.40" y2="380.26" stroke="#4f4f4f" stroke-width="0.8"/><line x1="531.43" y1="373.21" x2="540.82" y2="379.81" stroke="#4f4f4f" stroke-width="0.8"/><line x1="536.40" y1="380.26" x2="536.95" y2="387.77" stroke="#4f4f4f" stroke-width="0.8"/><line x1="531.98" y1="380.71" x2="541.36" y2="387.31" stroke="#4f4f4f" stroke-width="0.8"/><line x1="536.95" y1="387.77" x2="537.49" y2="395.27" stroke="#4f4f4f" stroke-width="0.8"/><line x1="532.53" y1="388.22" x2="541.91" y2="394.82" stroke="#4f4f4f" stroke-width="0.8"/><line x1="537.49" y1="395.27" x2="538.04" y2="402.78" stroke="#4f4f4f" stroke-width="0.8"/><line x1="533.07" y1="395.73" x2="542.46" y2="402.33" stroke="#4f4f4f" stroke-width="0.8"/><line x1="538.04" y1="402.78" x2="538.59" y2="410.29" stroke="#4f4f4f" stroke-width="0.8"/><line x1="533.62" y1="403.23" x2="543.00" y2="409.83" stroke="#4f4f4f" stroke-width="0.8"/><line x1="538.59" y1="410.29" x2="539.13" y2="417.79" stroke="#4f4f4f" stroke-width="0.8"/><line x1="534.17" y1="410.74" x2="543.55" y2="417.34" stroke="#4f4f4f" stroke-width="0.8"/><line x1="539.13" y1="417.79" x2="539.68" y2="425.30" stroke="#4f4f4f" stroke-width="0.8"/><line x1="534.71" y1="418.25" x2="544.10" y2="424.85" stroke="#4f4f4f" stroke-width="0.8"/><line x1="545.78" y1="386.86" x2="546.33" y2="394.37" stroke="#4f4f4f" stroke-width="0.8"/><line x1="541.36" y1="387.31" x2="550.75" y2="393.91" stroke="#4f4f4f" stroke-width="0.8"/><line x1="546.33" y1="394.37" x2="546.88" y2="401.87" stroke="#4f4f4f" stroke-width="0.8"/><line x1="541.91" y1="394.82" x2="551.29" y2="401.42" stroke="#4f4f4f" stroke-width="0.8"/><line x1="546.88" y1="401.87" x2="547.42" y2="409.38" stroke="#4f4f4f" stroke-width="0.8"/><line x1="542.46" y1="402.33" x2="551.84" y2="408.93" stroke="#4f4f4f" stroke-width="0.8"/><line x1="547.42" y1="409.38" x2="547.97" y2="416.89" stroke="#4f4f4f" stroke-width="0.8"/><line x1="543.00" y1="409.83" x2="552.39" y2="416.43" stroke="#4f4f4f" stroke-width="0.8"/><line x1="547.97" y1="416.89" x2="548.52" y2="424.39" stroke="#4f4f4f" stroke-width="0.8"/><line x1="543.55" y1="417.34" x2="552.93" y2="423.94" stroke="#4f4f4f" stroke-width="0.8"/><line x1="548.52" y1="424.39" x2="549.06" y2="431.90" stroke="#4f4f4f" stroke-width="0.8"/><line x1="544.10" y1="424.85" x2="553.48" y2="431.45" stroke="#4f4f4f" stroke-width="0.8"/>
</svg>
<svg class="abs" style="left:0;top:405px" width="145" height="89" viewBox="0 405 145 89"><rect x="0" y="413" width="139" height="5.2" fill="#e9e9e9"/><path d="M59.2,418.4 L61.8,413.8 L74,413.8 L76.6,418.4 Z" fill="#fff"/><rect x="64.2" y="415.9" width="7.8" height="1.8" fill="#d0d0d0"/><rect x="0" y="436.2" width="139" height="1" fill="#eeeeee"/><rect x="0" y="466.3" width="131" height="0.8" fill="#eeeeee"/><rect x="134.1" y="440.2" width="2.9" height="51" rx="1.4" fill="#e1e6ec"/><circle cx="15.7" cy="452" r="8.5" fill="#fff" stroke="#1e8a2d" stroke-width="1.4"/><path d="M12.4,449.4 L15.7,448 L19,449.4 L19,452.4 Q18.6,455.4 15.7,456.4 Q12.8,455.4 12.4,452.4 Z" fill="#1e8a2d"/><path d="M13.8,452.2 L15.3,453.6 L17.8,450.8" stroke="#fff" stroke-width="1" fill="none"/><circle cx="15.7" cy="481.4" r="8.5" fill="#fff" stroke="#1e8a2d" stroke-width="1.4"/><path d="M12.4,478.79999999999995 L15.7,477.4 L19,478.79999999999995 L19,481.79999999999995 Q18.6,484.79999999999995 15.7,485.79999999999995 Q12.8,484.79999999999995 12.4,481.79999999999995 Z" fill="#1e8a2d"/><path d="M13.8,481.59999999999997 L15.3,483.0 L17.8,480.2" stroke="#fff" stroke-width="1" fill="none"/></svg><svg class="abs" style="left:894px;top:32px" width="130" height="112" viewBox="894 32 130 112"><path d="M904.1,42.199999999999996 L905.9,40.4 L907.6999999999999,42.199999999999996" stroke="#b6c0cc" stroke-width="0.8" fill="none"/><path d="M904.1,92.2 L905.9,90.39999999999999 L907.6999999999999,92.2" stroke="#b6c0cc" stroke-width="0.8" fill="none"/><path d="M904.1,110.5 L905.9,108.69999999999999 L907.6999999999999,110.5" stroke="#b6c0cc" stroke-width="0.8" fill="none"/><line x1="905.2" y1="48" x2="905.2" y2="54" stroke="#e4e9ee"/><rect x="902.9" y="54.1" width="5" height="5" fill="#fff" stroke="#d5dce4" stroke-width="0.8"/><line x1="904" y1="56.6" x2="906.8" y2="56.6" stroke="#555" stroke-width="0.7"/><rect x="916.7" y="53.199999999999996" width="3.9" height="4.9" rx="1.56" fill="#cfcfcf"/><rect x="916.7" y="54.18" width="2.15" height="3.68" rx="1.17" fill="#555"/><rect x="914.8000000000001" y="55.8" width="3.8" height="4.2" rx="1.52" fill="#cfcfcf"/><rect x="914.8000000000001" y="56.64" width="2.09" height="3.15" rx="1.14" fill="#555"/><line x1="915.8" y1="61" x2="915.8" y2="67" stroke="#e4e9ee"/><rect x="913.1" y="67.6" width="5.3" height="5.3" fill="#fff" stroke="#d5dce4" stroke-width="0.8"/><rect x="915.2" y="69.7" width="1.1" height="1.1" fill="#555"/><path d="M925.8,70.3 Q928.8,67.2 931.8,70.3 Q928.8,73.4 925.8,70.3Z" fill="none" stroke="#555" stroke-width="0.8"/><circle cx="928.8" cy="70.3" r="1" fill="#555"/><path d="M939.5,67.2 L943,68.6 L943,72.4 L939.5,74 L936,72.4 L936,68.6Z" fill="#888"/><path d="M939.5,70 L943,68.6 L943,72.4 L939.5,74Z" fill="#bbb"/><path d="M936,68.6 L939.5,70 L939.5,74 L936,72.4Z" fill="#777"/><rect x="894" y="80.8" width="130" height="0.9" fill="#ececec"/><rect x="894" y="98.9" width="130" height="0.9" fill="#ececec"/><line x1="905.5" y1="117" x2="905.5" y2="137.8" stroke="#e4e9ee"/><line x1="905.5" y1="123.8" x2="908.5" y2="123.8" stroke="#e4e9ee"/><line x1="905.5" y1="137.8" x2="908.5" y2="137.8" stroke="#e4e9ee"/><path d="M914.7,123.8 Q917.8,120.8 920.9,123.8 Q917.8,126.8 914.7,123.8Z" fill="none" stroke="#c5c5c5" stroke-width="0.8"/><circle cx="917.8" cy="123.8" r="0.9" fill="#c5c5c5"/><path d="M914.7,137.3 Q917.8,134.3 920.9,137.3 Q917.8,140.3 914.7,137.3Z" fill="none" stroke="#c5c5c5" stroke-width="0.8"/><circle cx="917.8" cy="137.3" r="0.9" fill="#c5c5c5"/><path d="M925,121.4 L933,121.4 L933,126.6 L925,126.6Z" fill="#555"/><path d="M925,121.4 L926.5,120.3 L933.8,120.3 L933,121.4Z" fill="#888"/><circle cx="929" cy="137.3" r="0.9" fill="#333"/></svg><svg class="abs" style="left:510px;top:28px" width="210" height="30" viewBox="510 28 210 30"><rect x="591.6" y="31" width="21" height="21" rx="1.5" fill="#e3eef7"/><rect x="592" y="51.6" width="20.2" height="0.8" fill="#d8dde3"/><rect x="539.5" y="34.4" width="0.6" height="15" fill="#e7e7e7"/><rect x="565.3" y="34.4" width="0.6" height="15" fill="#e7e7e7"/><rect x="662.6" y="34.4" width="0.6" height="15" fill="#e7e7e7"/><rect x="689" y="34.4" width="0.6" height="15" fill="#e7e7e7"/><polygon points="527.00,37.90 523.45,39.95 523.45,44.05 527.00,46.10 530.55,44.05 530.55,39.95" fill="none" stroke="#777" stroke-width="0.9"/><path d="M523.5,40 L527,42 L530.5,40 M527,42 L527,46" stroke="#777" stroke-width="0.8" fill="none"/><path d="M532.3,49.6 L535,49.6 L535,46.9Z" fill="#999"/><polygon points="553.10,37.90 549.55,39.95 549.55,44.05 553.10,46.10 556.65,44.05 556.65,39.95" fill="#9a9a9a" stroke="#666" stroke-width="0.9"/><path d="M549.6,40 L553.1,42 L556.6,40 M553.1,42 L553.1,46" stroke="#666" stroke-width="0.8" fill="none"/><path d="M558.2,49.6 L560.9,49.6 L560.9,46.9Z" fill="#999"/><polygon points="579.00,37.90 575.62,39.85 575.62,43.75 579.00,45.70 582.38,43.75 582.38,39.85" fill="#e8502a" stroke="#222" stroke-width="0.9"/><path d="M575.6,39.8 L579,38 L582.4,39.8 L579,41.6Z" fill="#f2b0a8"/><path d="M579,41.6 L579,45.6" stroke="#222" stroke-width="0.8"/><circle cx="579.00" cy="37.70" r="1.05" fill="#111"/><circle cx="575.45" cy="39.75" r="1.05" fill="#111"/><circle cx="575.45" cy="43.85" r="1.05" fill="#111"/><circle cx="579.00" cy="45.90" r="1.05" fill="#111"/><circle cx="582.55" cy="43.85" r="1.05" fill="#111"/><circle cx="582.55" cy="39.75" r="1.05" fill="#111"/><circle cx="579" cy="41.8" r="0.9" fill="#111"/><polygon points="602.30,37.80 598.84,39.80 598.84,43.80 602.30,45.80 605.76,43.80 605.76,39.80" fill="#fff" stroke="#222" stroke-width="0.8"/><path d="M598.8,39.8 L602.3,41.8 L605.8,39.8 M602.3,41.8 L602.3,45.8" stroke="#222" stroke-width="0.8" fill="none"/><path d="M598.8,39.9 L602.3,41.9 L602.3,45.8 L598.8,43.8Z" fill="#e8502a"/><circle cx="602.30" cy="37.70" r="1.05" fill="#111"/><circle cx="598.75" cy="39.75" r="1.05" fill="#111"/><circle cx="598.75" cy="43.85" r="1.05" fill="#111"/><circle cx="602.30" cy="45.90" r="1.05" fill="#111"/><circle cx="605.85" cy="43.85" r="1.05" fill="#111"/><circle cx="605.85" cy="39.75" r="1.05" fill="#111"/><circle cx="602.3" cy="41.8" r="0.8" fill="#111"/><circle cx="625.90" cy="37.60" r="0.9" fill="#111"/><circle cx="624.10" cy="38.58" r="0.6" fill="#e2401c"/><circle cx="622.35" cy="39.65" r="0.9" fill="#111"/><circle cx="622.30" cy="41.70" r="0.6" fill="#e2401c"/><circle cx="622.35" cy="43.75" r="0.9" fill="#111"/><circle cx="624.10" cy="44.82" r="0.6" fill="#e2401c"/><circle cx="625.90" cy="45.80" r="0.9" fill="#111"/><circle cx="627.70" cy="44.82" r="0.6" fill="#e2401c"/><circle cx="629.45" cy="43.75" r="0.9" fill="#111"/><circle cx="629.50" cy="41.70" r="0.6" fill="#e2401c"/><circle cx="629.45" cy="39.65" r="0.9" fill="#111"/><circle cx="627.70" cy="38.58" r="0.6" fill="#e2401c"/><circle cx="625.9" cy="41.7" r="0.8" fill="#111"/><polygon points="649.30,37.80 645.84,39.80 645.84,43.80 649.30,45.80 652.76,43.80 652.76,39.80" fill="none" stroke="#e8603a" stroke-width="0.85"/><path d="M646.3,40.2 L649.3,42.2 L652.3,40.2 M649.3,42.2 L649.3,45.8" stroke="#555" stroke-width="0.8" fill="none"/><circle cx="649.30" cy="37.70" r="0.7" fill="#e2401c"/><circle cx="645.75" cy="39.75" r="0.7" fill="#e2401c"/><circle cx="645.75" cy="43.85" r="0.7" fill="#e2401c"/><circle cx="649.30" cy="45.90" r="0.7" fill="#e2401c"/><circle cx="652.85" cy="43.85" r="0.7" fill="#e2401c"/><circle cx="652.85" cy="39.75" r="0.7" fill="#e2401c"/><rect x="671" y="38.2" width="7" height="6.5" fill="none" stroke="#222" stroke-width="0.9" stroke-dasharray="1.3,1.1"/><path d="M676.5,42.8 L676.5,47.6 L677.7,46.5 L678.7,48.3 L679.5,47.9 L678.6,46.1 L680.2,46Z" fill="#111"/><g fill="#777"><circle cx="700.5" cy="39" r="1.5"/><circle cx="704.5" cy="41" r="1.5"/><circle cx="700.5" cy="43.5" r="1.5"/><circle cx="704" cy="45.3" r="1.3"/></g></svg><svg class="abs" style="left:920px;top:370px" width="104" height="124" viewBox="920 370 104 124"><rect x="1003.8" y="378.6" width="21" height="20.7" rx="2" fill="#fff" stroke="#e6eaef" stroke-width="0.8"/><g fill="#e01e1e"><ellipse cx="1013.6" cy="389.5" rx="2.3" ry="3.2"/><circle cx="1013.6" cy="385.6" r="1.4"/></g><path d="M1010.3,386.3 L1011.6,387.6 M1016.9,386.3 L1015.6,387.6 M1010,389.5 L1011.4,389.5 M1017.2,389.5 L1015.8,389.5 M1010.3,392.7 L1011.6,391.4 M1016.9,392.7 L1015.6,391.4" stroke="#e01e1e" stroke-width="0.9"/><rect x="1013.3" y="387.5" width="0.6" height="4.5" fill="#fff"/><polygon points="973,416.2 999.3,434.7 975.5,455.6 949.8,437.1" fill="#f4f4f4" stroke="#8a8a8a" stroke-width="0.8"/><polygon points="949.8,437.1 975.5,455.6 976.8,475.8 951,457.5" fill="#f4f4f4" stroke="#8a8a8a" stroke-width="0.8"/><polygon points="975.5,455.6 999.3,434.7 1000.8,454.3 976.8,475.8" fill="#f4f4f4" stroke="#8a8a8a" stroke-width="0.8"/><line x1="951.2" y1="457.5" x2="982" y2="428.8" stroke="#bfe0bf" stroke-width="0.6"/><line x1="950" y1="430.5" x2="951.2" y2="457.5" stroke="#7c86f0" stroke-width="0.9"/><line x1="951.2" y1="457.5" x2="980.2" y2="478" stroke="#f08070" stroke-width="0.9"/><text x="946.3" y="435" font-family="Liberation Sans" font-size="7" fill="#6f78f0">Z</text><text x="981.8" y="485.2" font-family="Liberation Sans" font-size="7" fill="#f07a6a">X</text><text x="980.4" y="431.6" font-family="Liberation Sans" font-size="4.5" fill="#bfe0bf">Y</text><text x="0" y="1.8" text-anchor="middle" font-family="Liberation Sans" font-size="5.2" textLength="18" lengthAdjust="spacingAndGlyphs" fill="#808080" transform="translate(973.9,436.4) rotate(33)">FRONT</text><text x="0" y="1.5" text-anchor="middle" font-family="Liberation Sans" font-size="4.2" textLength="21" lengthAdjust="spacingAndGlyphs" fill="#909090" transform="translate(963.5,456.7) rotate(34) scale(-1,1)">BOTTOM</text><text x="0" y="1.5" text-anchor="middle" font-family="Liberation Sans" font-size="4.2" textLength="11" lengthAdjust="spacingAndGlyphs" fill="#909090" transform="translate(987.6,455.2) rotate(102)">LEFT</text><polygon points="969.8,410.4 975.5,405 981.2,410.4" fill="none" stroke="#c4c4c4" stroke-width="0.8"/><polygon points="969.8,481.2 975.5,487.4 981.2,481.2" fill="none" stroke="#c4c4c4" stroke-width="0.8"/><polygon points="939.7,441 933.8,446.3 939.7,451.5" fill="none" stroke="#c4c4c4" stroke-width="0.8"/><polygon points="1010.5,441 1016.6,446.3 1010.5,451.5" fill="none" stroke="#c4c4c4" stroke-width="0.8"/><path d="M932.6,467.8 L936.6,463.3 L941,467.4 L939.3,467.4 Q939.6,479.6 953.4,481.3 L953.4,479.9 L958,484.2 L953.4,488.4 L953.4,486.8 Q934.6,485.5 934.3,467.8 Z" fill="none" stroke="#c4c4c4" stroke-width="0.8" stroke-linejoin="round"/><path d="M942.8,477.2 L939.4,481.2" stroke="#c4c4c4" stroke-width="0.6"/><path d="M1003.6,480.2 L1008.8,475.4 L1014,480.2 M1005,479 L1005,485.5 L1007.5,485.5 L1007.5,482.5 L1010.1,482.5 L1010.1,485.5 L1012.6,485.5 L1012.6,479" fill="none" stroke="#c4c4c4" stroke-width="0.8"/></svg><div class="abs" style="left:141px;top:258.8px;width:1.5px;height:8px;background:#dde3ea;border-radius:1px"></div><svg class="abs" style="left:535px;top:474px" width="100" height="12" viewBox="535 474 100 12"><path d="M541.8,480 L541.8,482.5 L628.3,482.5 L628.3,480" fill="none" stroke="#ffffff" stroke-width="2.6" opacity="0.7"/><path d="M541.8,479.8 L541.8,482.5 L628.3,482.5 L628.3,479.8" fill="none" stroke="#1a1a1a" stroke-width="1"/></svg>
<div class="t" style="left:34.20px;top:9.52px;font-size:9.757px;line-height:9.757px;font-weight:bold;color:#1b5088;transform:scaleX(0.8319);">Test1</div>
<div class="t" style="left:774.80px;top:9.69px;font-size:8.885px;line-height:8.885px;font-weight:normal;color:#444;transform:scaleX(0.7822);">Dashboard</div>
<div class="t" style="left:820.00px;top:9.69px;font-size:8.885px;line-height:8.885px;font-weight:normal;color:#444;transform:scaleX(0.7794);">Public Projects</div>
<div class="t" style="left:877.00px;top:9.69px;font-size:8.885px;line-height:8.885px;font-weight:normal;color:#444;transform:scaleX(0.7791);">Forum</div>
<div class="t" style="left:908.20px;top:9.69px;font-size:8.885px;line-height:8.885px;font-weight:normal;color:#444;transform:scaleX(0.8099);">Help</div>
<div class="t" style="left:937.80px;top:9.69px;font-size:8.885px;line-height:8.885px;font-weight:normal;color:#444;transform:scaleX(0.8325);">hc2011301539</div>
<div class="t" style="left:26.20px;top:36.42px;font-size:8.449px;line-height:8.449px;font-weight:normal;-webkit-text-stroke:0.3px #404040;color:#404040;transform:scaleX(0.8427);">Geometries</div>
<div class="t" style="left:27.60px;top:52.42px;font-size:8.449px;line-height:8.449px;font-weight:normal;color:#505050;transform:scaleX(0.8016);">Hong_Chen_test1</div>
<div class="t" style="left:27.60px;top:66.12px;font-size:8.449px;line-height:8.449px;font-weight:normal;color:#505050;transform:scaleX(0.8016);">Hong_Chen_test1</div>
<div class="t" style="left:26.20px;top:82.42px;font-size:8.449px;line-height:8.449px;font-weight:normal;-webkit-text-stroke:0.3px #404040;color:#404040;transform:scaleX(0.8427);">Simulations</div>
<div class="t" style="left:27.60px;top:97.12px;font-size:8.449px;line-height:8.449px;font-weight:normal;color:#505050;transform:scaleX(0.8237);">Incompressible</div>
<div class="t" style="left:38.50px;top:111.52px;font-size:8.449px;line-height:8.449px;font-weight:normal;color:#505050;transform:scaleX(0.8493);">Geometry</div>
<div class="t" style="left:38.50px;top:124.52px;font-size:8.449px;line-height:8.449px;font-weight:normal;color:#555;transform:scaleX(0.8470);">Mesh</div>
<div class="t" style="left:37.00px;top:138.52px;font-size:8.449px;line-height:8.449px;font-weight:normal;color:#505050;transform:scaleX(0.8181);">Refinements</div>
<div class="t" style="left:37.00px;top:152.22px;font-size:8.449px;line-height:8.449px;font-weight:normal;color:#505050;transform:scaleX(0.8467);">Geometry primitives</div>
<div class="t" style="left:60.60px;top:166.02px;font-size:8.449px;line-height:8.449px;font-weight:normal;color:#505050;transform:scaleX(0.8117);">Background Mesh Box</div>
<div class="t" style="left:60.60px;top:179.42px;font-size:8.449px;line-height:8.449px;font-weight:normal;color:#505050;transform:scaleX(0.8557);">Material Point</div>
<div class="t" style="left:37.00px;top:192.92px;font-size:8.449px;line-height:8.449px;font-weight:normal;color:#505050;transform:scaleX(0.8020);">Meshing Log</div>
<div class="t" style="left:26.20px;top:206.22px;font-size:8.449px;line-height:8.449px;font-weight:normal;color:#505050;transform:scaleX(0.8494);">Geometry primitives</div>
<div class="t" style="left:38.50px;top:219.82px;font-size:8.449px;line-height:8.449px;font-weight:normal;color:#505050;transform:scaleX(0.8607);">Materials</div>
<div class="t" style="left:26.20px;top:233.42px;font-size:8.449px;line-height:8.449px;font-weight:normal;color:#505050;transform:scaleX(0.8550);">Initial conditions</div>
<div class="t" style="left:26.20px;top:247.32px;font-size:8.449px;line-height:8.449px;font-weight:normal;color:#505050;transform:scaleX(0.8320);">Boundary conditions</div>
<div class="t" style="left:49.60px;top:261.02px;font-size:8.449px;line-height:8.449px;font-weight:normal;color:#505050;transform:scaleX(0.8443);">Velocity inlet 1</div>
<div class="t" style="left:26.20px;top:274.52px;font-size:8.449px;line-height:8.449px;font-weight:normal;color:#505050;transform:scaleX(0.8109);">Advanced concepts</div>
<div class="t" style="left:38.50px;top:287.72px;font-size:8.449px;line-height:8.449px;font-weight:normal;color:#505050;transform:scaleX(0.8325);">Numerics</div>
<div class="t" style="left:38.50px;top:301.62px;font-size:8.449px;line-height:8.449px;font-weight:normal;color:#505050;transform:scaleX(0.8443);">Simulation control</div>
<div class="t" style="left:26.20px;top:315.42px;font-size:8.449px;line-height:8.449px;font-weight:normal;color:#505050;transform:scaleX(0.8363);">Result control</div>
<div class="t" style="left:38.50px;top:328.82px;font-size:8.449px;line-height:8.449px;font-weight:normal;color:#505050;transform:scaleX(0.8128);">Simulation Runs</div>
<div class="t" style="left:5.70px;top:422.74px;font-size:9.466px;line-height:9.466px;font-weight:normal;-webkit-text-stroke:0.3px #222;color:#222;transform:scaleX(0.8390);">Job status</div>
<div class="t" style="left:29.50px;top:442.91px;font-size:8.594px;line-height:8.594px;font-weight:normal;color:#333;transform:scaleX(0.7913);">Mesh 1</div>
<div class="t" style="left:29.50px;top:453.19px;font-size:7.577px;line-height:7.577px;font-weight:normal;color:#888;transform:scaleX(0.8528);">Mesh</div>
<div class="t" style="left:29.50px;top:472.41px;font-size:8.594px;line-height:8.594px;font-weight:normal;color:#333;transform:scaleX(0.7913);">Mesh 1</div>
<div class="t" style="left:29.50px;top:482.69px;font-size:7.577px;line-height:7.577px;font-weight:normal;color:#888;transform:scaleX(0.8528);">Mesh</div>
<div class="t" style="left:149.40px;top:39.64px;font-size:9.466px;line-height:9.466px;font-weight:normal;color:#222;transform:scaleX(0.8408);">Mesh 1</div>
<div class="t" style="left:149.40px;top:65.04px;font-size:8.303px;line-height:8.303px;font-weight:normal;-webkit-text-stroke:0.3px #333;color:#333;transform:scaleX(0.8522);">Mesh selection</div>
<div class="t" style="left:163.00px;top:83.95px;font-size:8.158px;line-height:8.158px;font-weight:normal;color:#333;transform:scaleX(0.8451);">Simulation assignment on the geometry is not</div>
<div class="t" style="left:163.00px;top:94.15px;font-size:8.158px;line-height:8.158px;font-weight:normal;color:#333;transform:scaleX(0.8586);">supported for the currently selected mesh. Try to</div>
<div class="t" style="left:163.00px;top:104.25px;font-size:8.158px;line-height:8.158px;font-weight:normal;color:#333;transform:scaleX(0.8348);">regenerate your mesh or use the mesh as simulation</div>
<div class="t" style="left:163.00px;top:114.05px;font-size:8.158px;line-height:8.158px;font-weight:normal;color:#333;transform:scaleX(0.8579);">domain.</div>
<div class="t" style="left:156.60px;top:132.65px;font-size:8.158px;line-height:8.158px;font-weight:normal;color:#333;transform:scaleX(0.7643);">Use Mesh as Domain</div>
<div class="t" style="left:174.80px;top:155.14px;font-size:8.303px;line-height:8.303px;font-weight:normal;color:#333;transform:scaleX(0.8006);">Mesh 1</div>
<div class="t" style="left:149.40px;top:166.22px;font-size:7.286px;line-height:7.286px;font-weight:normal;color:#888;transform:scaleX(0.8596);">Finished | 88.7k cells, 116.6k nodes</div>
<div class="t" style="left:149.40px;top:190.24px;font-size:8.303px;line-height:8.303px;font-weight:normal;color:#444;transform:scaleX(0.8725);">Algorithm</div>
<div class="t" style="left:149.40px;top:210.84px;font-size:8.303px;line-height:8.303px;font-weight:normal;color:#444;transform:scaleX(0.8318);">Meshing mode</div>
<div class="t" style="left:149.40px;top:230.74px;font-size:8.303px;line-height:8.303px;font-weight:normal;color:#444;transform:scaleX(0.7959);">Sizing</div>
<div class="t" style="left:149.40px;top:250.24px;font-size:8.303px;line-height:8.303px;font-weight:normal;color:#444;transform:scaleX(0.8043);">Fineness</div>
<div class="t" style="left:149.40px;top:273.84px;font-size:8.303px;line-height:8.303px;font-weight:normal;color:#444;transform:scaleX(0.8337);">Number of processors</div>
<div class="clip" style="left:254.30px;top:188.24px;width:64.4px;height:12.30px;"><div class="t" style="left:0;top:2px;font-size:8.303px;line-height:8.303px;font-weight:normal;color:#444;transform:scaleX(0.8600);">Hex-dominant (only CFD)</div></div>
<div class="t" style="left:254.30px;top:210.84px;font-size:8.303px;line-height:8.303px;font-weight:normal;color:#444;transform:scaleX(0.8536);">External</div>
<div class="clip" style="left:254.30px;top:228.74px;width:63.7px;height:12.30px;"><div class="t" style="left:0;top:2px;font-size:8.303px;line-height:8.303px;font-weight:normal;color:#444;transform:scaleX(0.8600);">Automatic mesh sizing</div></div>
<div class="t" style="left:254.30px;top:250.24px;font-size:8.303px;line-height:8.303px;font-weight:normal;color:#444;transform:scaleX(0.8182);">Coarse</div>
<div class="t" style="left:254.30px;top:273.84px;font-size:8.303px;line-height:8.303px;font-weight:normal;color:#444;transform:scaleX(0.7796);">16</div>
<div class="t" style="left:156.60px;top:294.74px;font-size:8.303px;line-height:8.303px;font-weight:normal;-webkit-text-stroke:0.3px #333;color:#333;transform:scaleX(0.8348);">Event log</div>
<div class="t" style="left:303.00px;top:320.25px;font-size:8.158px;line-height:8.158px;font-weight:normal;-webkit-text-stroke:0.3px #3a9a3f;color:#3a9a3f;transform:scaleX(0.7783);">Finished</div>
<div class="t" style="left:266.00px;top:330.27px;font-size:7.867px;line-height:7.867px;font-weight:normal;color:#666;transform:scaleX(0.7971);">2 min - 0.5 core hours</div>
<div class="t" style="left:912.60px;top:36.42px;font-size:8.449px;line-height:8.449px;font-weight:normal;-webkit-text-stroke:0.3px #404040;color:#404040;transform:scaleX(0.8422);">Mesh</div>
<div class="t" style="left:925.80px;top:52.42px;font-size:8.449px;line-height:8.449px;font-weight:normal;color:#555;transform:scaleX(0.7868);">Mesh 1</div>
<div class="t" style="left:947.00px;top:66.12px;font-size:8.449px;line-height:8.449px;font-weight:normal;color:#505050;transform:scaleX(0.8296);">BoundingVolume</div>
<div class="t" style="left:912.60px;top:86.42px;font-size:8.449px;line-height:8.449px;font-weight:normal;-webkit-text-stroke:0.3px #404040;color:#404040;transform:scaleX(0.8364);">Topological Entity Sets</div>
<div class="t" style="left:912.60px;top:104.52px;font-size:8.449px;line-height:8.449px;font-weight:normal;-webkit-text-stroke:0.3px #404040;color:#404040;transform:scaleX(0.8573);">Geometry Primitives</div>
<div class="t" style="left:936.00px;top:119.62px;font-size:8.449px;line-height:8.449px;font-weight:normal;color:#505050;transform:scaleX(0.8117);">Background Mesh Box</div>
<div class="t" style="left:936.00px;top:133.12px;font-size:8.449px;line-height:8.449px;font-weight:normal;color:#505050;transform:scaleX(0.8518);">Material Point</div>
<div class="t" style="left:576.00px;top:485.19px;font-size:7.577px;line-height:7.577px;font-weight:normal;color:#444;transform:scaleX(0.8549);">20 [m]</div>
</body></html>
